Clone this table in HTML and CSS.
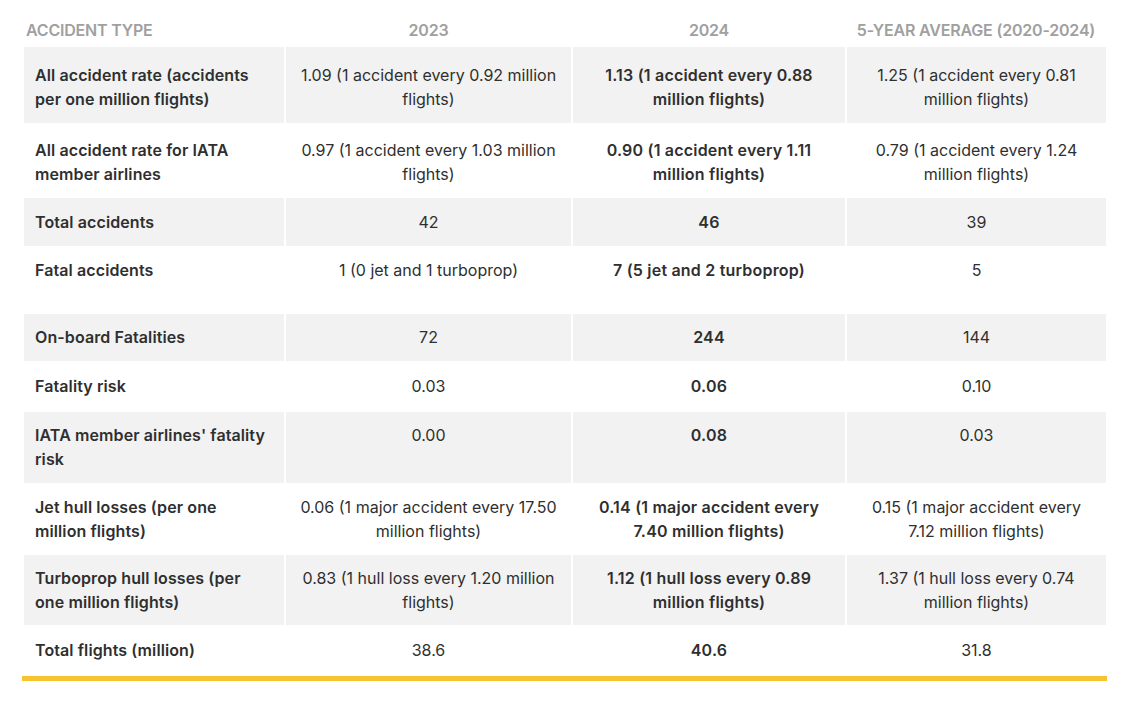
FILE: index.html
```html
<!DOCTYPE html>
<html lang="en">
<head>
<meta charset="utf-8">
<title>Accident statistics</title>
<link rel="stylesheet" href="styles.css">
</head>
<body>
<div class="wrap">
  <table class="stats">
    <colgroup>
      <col class="c1"><col class="c2"><col class="c3"><col class="c4">
    </colgroup>
    <thead>
      <tr>
        <th class="left">Accident type</th>
        <th>2023</th>
        <th>2024</th>
        <th>5-year average (2020-2024)</th>
      </tr>
    </thead>
    <tbody>
      <tr class="gray r1">
        <td class="label">All accident rate (accidents per one million flights)</td>
        <td>1.09 (1 accident every 0.92 million flights)</td>
        <td class="strong">1.13 (1 accident every 0.88 million flights)</td>
        <td>1.25 (1 accident every 0.81 million flights)</td>
      </tr>
      <tr class="r2">
        <td class="label">All accident rate for IATA member airlines</td>
        <td>0.97 (1 accident every 1.03 million flights)</td>
        <td class="strong">0.90 (1 accident every 1.11 million flights)</td>
        <td>0.79 (1 accident every 1.24 million flights)</td>
      </tr>
      <tr class="gray even">
        <td class="label">Total accidents</td>
        <td>42</td>
        <td class="strong">46</td>
        <td>39</td>
      </tr>
      <tr class="tall">
        <td class="label">Fatal accidents</td>
        <td>1 (0 jet and 1 turboprop)</td>
        <td class="strong">7 (5 jet and 2 turboprop)</td>
        <td>5</td>
      </tr>
      <tr class="gray">
        <td class="label">On-board Fatalities</td>
        <td>72</td>
        <td class="strong">244</td>
        <td>144</td>
      </tr>
      <tr class="roomy">
        <td class="label">Fatality risk</td>
        <td>0.03</td>
        <td class="strong">0.06</td>
        <td>0.10</td>
      </tr>
      <tr class="gray">
        <td class="label">IATA member airlines' fatality risk</td>
        <td>0.00</td>
        <td class="strong">0.08</td>
        <td>0.03</td>
      </tr>
      <tr class="even">
        <td class="label">Jet hull losses (per one million flights)</td>
        <td>0.06 (1 major accident every 17.50 million flights)</td>
        <td class="strong">0.14 (1 major accident every 7.40 million flights)</td>
        <td>0.15 (1 major accident every 7.12 million flights)</td>
      </tr>
      <tr class="gray snug">
        <td class="label">Turboprop hull losses (per one million flights)</td>
        <td>0.83 (1 hull loss every 1.20 million flights)</td>
        <td class="strong">1.12 (1 hull loss every 0.89 million flights)</td>
        <td>1.37 (1 hull loss every 0.74 million flights)</td>
      </tr>
      <tr class="roomy">
        <td class="label">Total flights (million)</td>
        <td>38.6</td>
        <td class="strong">40.6</td>
        <td>31.8</td>
      </tr>
    </tbody>
  </table>
  <div class="rule"></div>
</div>
</body>
</html>
```

FILE: styles.css
```css
html, body {
  margin: 0;
  padding: 0;
  background: #ffffff;
}

body {
  font-family: Inter, "Liberation Sans", Arial, sans-serif;
  color: #2f2f2f;
}

.wrap {
  padding: 18px 0 0 24px;
  width: 1082px;
}

.stats {
  width: 1082px;
  table-layout: fixed;
  border-collapse: collapse;
  font-size: 16px;
  line-height: 24px;
}

.c1 { width: 261px; }
.c2 { width: 287px; }
.c3 { width: 274px; }
.c4 { width: 260px; }

.stats th {
  font-weight: 600;
  color: #a0a0a0;
  text-transform: uppercase;
  text-align: center;
  padding: 0 0 5px;
  font-size: 16px;
  line-height: 24px;
  letter-spacing: -0.2px;
}

.stats th.left {
  text-align: left;
  padding-left: 2px;
}

.stats td {
  vertical-align: top;
  text-align: center;
  padding: 11px 14px 12px;
  border-left: 2px solid #ffffff;
  letter-spacing: 0;
}

.stats td:first-child {
  border-left: none;
}

.stats td.label {
  text-align: left;
  font-weight: 600;
  letter-spacing: 0.1px;
  padding-left: 11px;
  padding-right: 18px;
}

.stats td.strong {
  font-weight: 600;
  letter-spacing: 0.2px;
}

.stats tr.gray td {
  background: #f2f2f2;
}

.stats tr.r1 td {
  padding-top: 16px;
}

.stats tr.r2 td {
  padding-top: 15px;
}

.stats tr.even td {
  padding-top: 12px;
  padding-bottom: 12px;
}

.stats tr.tall td {
  padding-top: 12px;
  padding-bottom: 32px;
}

.stats tr.roomy td {
  padding-top: 13px;
  padding-bottom: 14px;
}

.stats tr.snug td {
  padding-bottom: 11px;
}

.rule {
  height: 5px;
  background: #f7c331;
  margin: 0 0 0 -2px;
  width: 1085px;
}
```
